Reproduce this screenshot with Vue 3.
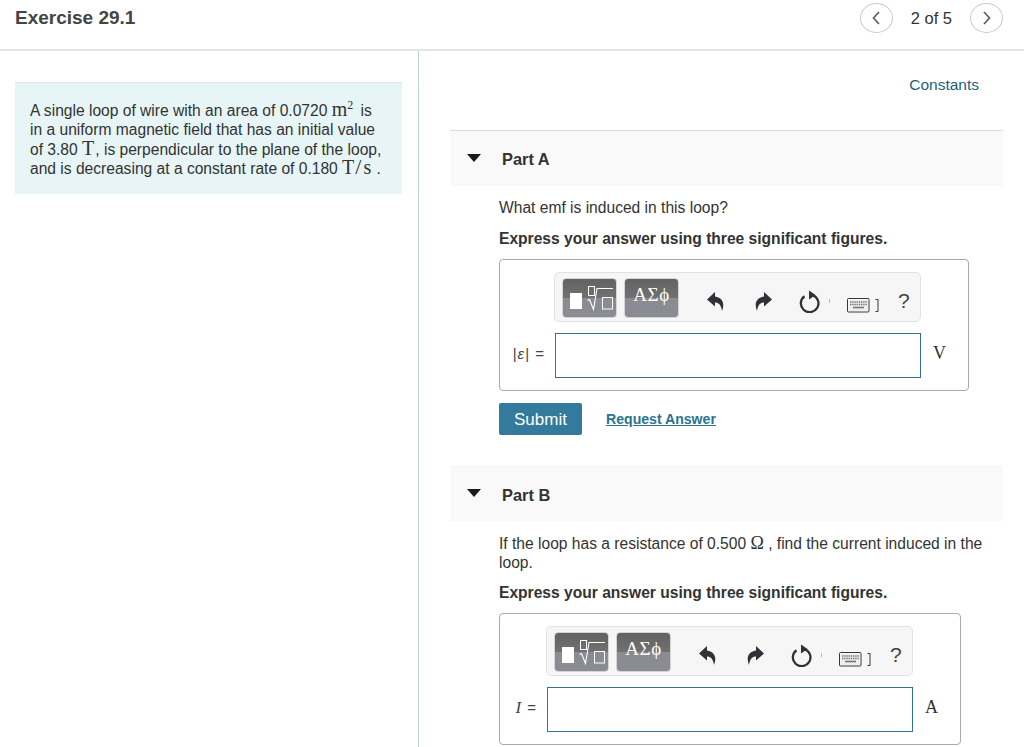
<script setup>
const parts = [
  { id: 'A', prompt: 'a', unit: 'V' },
  { id: 'B', prompt: 'b', unit: 'A' }
]
</script>

<template>
  <div class="page">
    <header class="top">
      <h1 class="title">Exercise 29.1</h1>
      <nav class="pager">
        <span class="circle"><svg width="10" height="14" viewBox="0 0 10 14"><path d="M8 1 2.500 7 8 13" fill="none" stroke="#5a6068" stroke-width="1.700"/></svg></span>
        <span class="count">2 of 5</span>
        <span class="circle"><svg width="10" height="14" viewBox="0 0 10 14"><path d="M2 1 7.500 7 2 13" fill="none" stroke="#5a6068" stroke-width="1.700"/></svg></span>
      </nav>
    </header>
    <div class="cols">
      <aside class="left">
        <div class="problem">
          A single loop of wire with an area of 0.0720 <span class="m mm">m<sup>2</sup></span> is<br>
          in a uniform magnetic field that has an initial value<br>
          of 3.80 <span class="m big">T</span>, is perpendicular to the plane of the loop,<br>
          and is decreasing at a constant rate of 0.180 <span class="m big">T</span><span class="m big slash">/</span><span class="m big">s</span> .
        </div>
      </aside>
      <main class="right">
        <div class="constants"><span>Constants</span></div>
        <section v-for="p in parts" :key="p.id" class="part" :class="'part-' + p.prompt">
          <div class="part-head">
            <svg class="tri" width="14" height="8" viewBox="0 0 14 8"><path d="M0 0h14L7 8z" fill="#1a1a1a"/></svg>
            <span class="part-label">Part {{ p.id }}</span>
          </div>
          <div class="part-body">
            <p v-if="p.id === 'A'" class="q">What emf is induced in this loop?</p>
            <p v-else class="q">If the loop has a resistance of 0.500 <span class="m omega">Ω</span> , find the current induced in the loop.</p>
            <p class="hint">Express your answer using three significant figures.</p>
            <div class="answer">
              <div class="toolbar">
                <div class="tb-btn">
                  <svg width="53" height="38" viewBox="0 0 53 38">
                    <rect x="7" y="14" width="12" height="16" fill="#fff"/>
                    <rect x="25.500" y="7.500" width="6" height="9" fill="none" stroke="#fff"/>
                    <path d="M24.500 21.500l2-1 4 10 3.500-21H50" fill="none" stroke="#fff" stroke-width="1.100"/>
                    <rect x="39.500" y="18.500" width="10" height="11.500" fill="none" stroke="#fff"/>
                  </svg>
                </div>
                <div class="tb-btn greek">ΑΣϕ</div>
                <div class="tools">
                  <svg class="ic" width="17" height="19" viewBox="0 0 17 19"><path d="M8 0 0 7.500 8 14.500V10.500C11.500 10.500 14 12.500 15 19 17.500 13 17 6 8 4.500z" fill="#2e3236"/></svg>
                  <svg class="ic r" width="17" height="19" viewBox="0 0 17 19"><path d="M9 0 17 7.500 9 14.500V10.500C5.500 10.500 3 12.500 2 19-.5 13 0 6 9 4.500z" fill="#2e3236"/></svg>
                  <svg class="ic u" width="21" height="23" viewBox="0 0 21 23"><path d="M5.500 6.200A8.800 8.800 0 1 0 14 5.200" fill="none" stroke="#2e3236" stroke-width="2.300"/><path d="M10 0.500v9l6.500-4.500z" fill="#2e3236"/></svg>
                  <span class="tick"></span>
                  <svg class="ic k" width="33" height="15" viewBox="0 0 33 15">
                    <rect x="0.500" y="0.500" width="21.500" height="13.500" rx="1" fill="#fff" stroke="#33373b"/>
                    <rect x="1.500" y="1.500" width="19.500" height="11.500" fill="#eee"/>
                    <path d="M3 4h17M3 6.500h17" stroke="#777" stroke-width="1.400" stroke-dasharray="1.400 .8"/>
                    <path d="M6 9.500h11" stroke="#777" stroke-width="1.600"/>
                    <path d="M28.500 1.500h2.500v12h-2.500" fill="none" stroke="#33373b"/>
                  </svg>
                  <span class="help">?</span>
                </div>
              </div>
              <div class="entry">
                <span class="sym"><template v-if="p.id === 'A'">|<i>ε</i>| =</template><template v-else><i class="serif">I</i> =</template></span>
                <div class="input"></div>
                <span class="unit">{{ p.unit }}</span>
              </div>
            </div>
            <div v-if="p.id === 'A'" class="actions">
              <span class="submit">Submit</span>
              <span class="req">Request Answer</span>
            </div>
          </div>
        </section>
      </main>
    </div>
  </div>
</template>

<style>
html, body { margin: 0; height: 100%; overflow: hidden; background: #fff; }
</style>

<style scoped>
.page { width: 1024px; height: 747px; overflow: hidden; font-family: "Liberation Sans", Arial, sans-serif; color: #333; font-size: 15.600px; line-height: 19px; }
.top { height: 49px; border-bottom: 2px solid #e4e4e4; display: flex; align-items: center; justify-content: space-between; padding: 0 21px 0 15px; }
.title { margin: 0 0 14px; font-size: 19px; line-height: 22px; font-weight: 700; color: #444; }
.pager { display: flex; align-items: center; gap: 18px; margin-bottom: 13px; }
.circle { width: 31px; height: 28px; border: 1px solid #c9c9c9; border-radius: 50%; display: flex; align-items: center; justify-content: center; }
.count { font-size: 16.500px; color: #333; }
.cols { display: flex; height: 696px; }
.left { flex: none; border-right: 1px solid #c3d3dd; padding: 31px 16px 0 15px; width: 387px; }
.problem { height: 112px; box-sizing: border-box; background: #e7f5f6; border-top: 1px solid #dfe6e6; padding: 18px 15px 0; line-height: 19.300px; white-space: nowrap; }
.m { font-family: "Liberation Serif", serif; }
.mm { font-size: 20px; line-height: 10px; margin-right: 3px; }
.big { font-size: 20px; line-height: 10px; letter-spacing: 1px; }
.slash { font-size: 22px; letter-spacing: 2px; }
sup { font-size: 12px; line-height: 0; vertical-align: 7px; }
.omega { font-size: 18px; line-height: 10px; }
.right { flex: 1; padding: 0 21px 0 31px; min-width: 0; }
.constants { height: 79px; padding-top: 24px; box-sizing: border-box; text-align: right; padding-right: 24px; color: #1f5f7f; font-size: 15.500px; line-height: 19px; }
.part-head { height: 56px; box-sizing: border-box; border-top: 1px solid #dcdcdc; background: #f9f9f9; display: flex; align-items: center; padding-left: 17px; font-weight: 700; color: #333; font-size: 16.400px; gap: 21px; }
.part-b .part-head { border-top-color: #f9f9f9; }
.part-label { margin-top: 2px; }
.part-b .part-label { margin-top: 4px; }
.tri { margin-top: -1px; }
.part-body { padding: 0 0 0 49px; }
.q { margin: 12px 20px 0 0; line-height: 19px; }
.part-b .q { margin-top: 13px; }
.hint { margin: 12px 0 0; font-weight: 700; line-height: 19px; }
.part-b .hint { margin-top: 11px; }
.answer { margin-top: 11px; height: 132px; width: 470px; box-sizing: border-box; border: 1px solid #aaa; border-radius: 4px; padding: 12px 0 0; }
.part-b .answer { width: 462px; }
.toolbar { margin-left: 54px; width: 367px; height: 50px; box-sizing: border-box; background: #f6f6f6; border: 1px solid #e2e2e2; border-radius: 5px; display: flex; align-items: center; padding: 1px 0 0 7px; gap: 7px; }
.part-b .toolbar { margin-left: 46px; }
.tb-btn { width: 55px; height: 40px; flex: none; box-sizing: border-box; border-radius: 4px; border: 1px solid #d4d4d4; background: linear-gradient(#626262, #717171 50%, #8b8b93 50%, #8b8b93); color: #fff; display: flex; align-items: center; justify-content: center; }
.greek { font-family: "Liberation Serif", serif; font-size: 19px; letter-spacing: 0.500px; padding-bottom: 6px; }
.tools { display: flex; align-items: center; margin-left: 21px; height: 100%; }
.ic { flex: none; margin-top: 8px; }
.ic.r { margin-left: 31px; }
.ic.u { margin-left: 27px; margin-top: 8px; }
.tick { width: 1px; height: 4px; background: #bbb; margin: 6px 0 0 9px; }
.ic.k { margin-left: 17px; margin-top: 16px; }
.help { margin-left: 18px; font-size: 21px; color: #444; margin-top: 6px; }
.entry { display: flex; align-items: center; margin-top: 11px; }
.sym { width: 55px; text-align: right; padding-right: 10px; box-sizing: border-box; color: #444; font-size: 15px; letter-spacing: 1px; margin-top: -4px; }
.part-b .sym { width: 47px; }
.serif { font-family: "Liberation Serif", serif; font-size: 17px; }
.input { width: 366px; height: 45px; box-sizing: border-box; border: 1px solid #2f7396; background: #fff; }
.unit { margin-left: 12px; font-family: "Liberation Serif", serif; font-size: 18px; color: #333; margin-top: -4px; }
.actions { display: flex; align-items: center; margin-top: 12px; }
.submit { width: 83px; height: 32px; background: #347a9c; border-radius: 2px; color: #fff; font-size: 17px; display: flex; align-items: center; justify-content: center; }
.req { margin-left: 24px; color: #2a7391; font-weight: 700; font-size: 14.100px; text-decoration: underline; }
.part-b { margin-top: 30px; }
</style>
